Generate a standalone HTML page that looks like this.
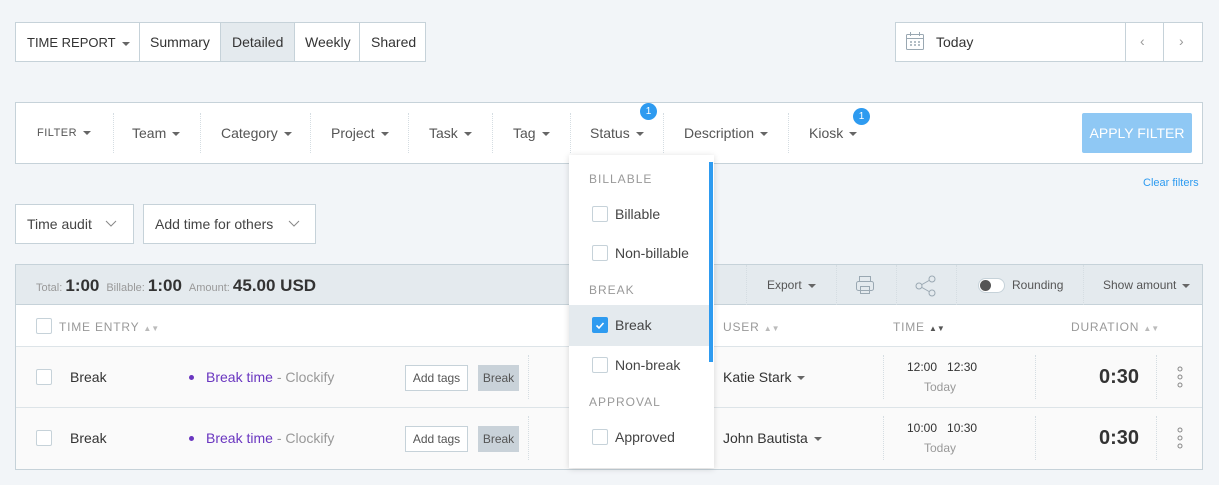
<!DOCTYPE html><html><head><meta charset="utf-8"><style>
*{box-sizing:border-box;margin:0;padding:0}
body{width:1219px;height:485px;background:#f2f5f8;font-family:"Liberation Sans",sans-serif;color:#333;position:relative;overflow:hidden;font-size:14px}
.a{position:absolute}
.box{position:absolute;background:#fff;border:1px solid #c6d2d9}
.t{position:absolute;white-space:nowrap}
.car{display:inline-block;width:0;height:0;border-left:4px solid transparent;border-right:4px solid transparent;border-top:4px solid #666;vertical-align:middle;margin-left:6px}
.sep{position:absolute;border-left:1px dotted #d5dde2}
.cb{position:absolute;width:16px;height:16px;border:1px solid #c6d2d9;background:#fff;border-radius:2px}
.g{color:#999}
.badge{position:absolute;width:17px;height:17px;border-radius:50%;background:#2e9bf0;color:#fff;font-size:10px;text-align:center;line-height:17px}
.so{color:#bbb;font-size:8px;letter-spacing:0}
</style></head><body>
<div class="box" style="left:15px;top:22px;width:411px;height:40px"></div>
<div class="a" style="left:220px;top:23px;width:74px;height:38px;background:#e4eaee"></div>
<div class="sep" style="left:139px;top:23px;height:38px;border-left:1px solid #c6d2d9"></div>
<div class="sep" style="left:220px;top:23px;height:38px;border-left:1px solid #c6d2d9"></div>
<div class="sep" style="left:294px;top:23px;height:38px;border-left:1px solid #c6d2d9"></div>
<div class="sep" style="left:359px;top:23px;height:38px;border-left:1px solid #c6d2d9"></div>
<div class="t" style="left:27px;top:35px;font-size:13px">TIME REPORT<span class="car"></span></div>
<div class="t" style="left:150px;top:34px">Summary</div>
<div class="t" style="left:232px;top:34px">Detailed</div>
<div class="t" style="left:305px;top:34px">Weekly</div>
<div class="t" style="left:371px;top:34px">Shared</div>
<div class="box" style="left:895px;top:22px;width:308px;height:40px"></div>
<div class="sep" style="left:1125px;top:23px;height:38px;border-left:1px solid #c6d2d9"></div>
<div class="sep" style="left:1163px;top:23px;height:38px;border-left:1px solid #c6d2d9"></div>
<svg class="a" style="left:905px;top:31px" width="20" height="20" viewBox="0 0 20 20" fill="none" stroke="#9aa8b2"><rect x="1.5" y="3.5" width="17" height="15" rx="1"/><path d="M1.5 7.5h17M5.5 1v4M14.5 1v4"/><path d="M5 11h2M9 11h2M13 11h2M5 14h2M9 14h2M13 14h2" stroke-width="1.5"/></svg>
<div class="t" style="left:936px;top:34px">Today</div>
<div class="t g" style="left:1140px;top:33px">‹</div>
<div class="t g" style="left:1179px;top:33px">›</div>
<div class="box" style="left:15px;top:102px;width:1188px;height:62px"></div>
<div class="t" style="left:37px;top:127px;font-size:11px;letter-spacing:.5px;color:#555">FILTER<span class="car"></span></div>
<div class="t" style="left:132px;top:125px;color:#555">Team<span class="car"></span></div>
<div class="t" style="left:221px;top:125px;color:#555">Category<span class="car"></span></div>
<div class="t" style="left:331px;top:125px;color:#555">Project<span class="car"></span></div>
<div class="t" style="left:429px;top:125px;color:#555">Task<span class="car"></span></div>
<div class="t" style="left:513px;top:125px;color:#555">Tag<span class="car"></span></div>
<div class="t" style="left:590px;top:125px;color:#555">Status<span class="car"></span></div>
<div class="t" style="left:684px;top:125px;color:#555">Description<span class="car"></span></div>
<div class="t" style="left:809px;top:125px;color:#555">Kiosk<span class="car"></span></div>
<div class="sep" style="left:113px;top:113px;height:40px"></div>
<div class="sep" style="left:200px;top:113px;height:40px"></div>
<div class="sep" style="left:310px;top:113px;height:40px"></div>
<div class="sep" style="left:408px;top:113px;height:40px"></div>
<div class="sep" style="left:492px;top:113px;height:40px"></div>
<div class="sep" style="left:570px;top:113px;height:40px"></div>
<div class="sep" style="left:663px;top:113px;height:40px"></div>
<div class="sep" style="left:788px;top:113px;height:40px"></div>
<div class="badge" style="left:640px;top:103px">1</div>
<div class="badge" style="left:853px;top:108px">1</div>
<div class="a" style="left:1082px;top:113px;width:110px;height:40px;background:#8fc8f4;border-radius:2px;color:#fff;text-align:center;line-height:40px;font-size:14px">APPLY FILTER</div>
<div class="t" style="left:1143px;top:177px;font-size:11px;color:#2e9bf0">Clear filters</div>
<div class="box" style="left:15px;top:204px;width:119px;height:40px"></div>
<div class="t" style="left:27px;top:216px;color:#444">Time audit</div>
<svg class="a" style="left:105px;top:220px" width="12" height="8"><path d="M1 1l5 5 5-5" fill="none" stroke="#888"/></svg>
<div class="box" style="left:143px;top:204px;width:173px;height:40px"></div>
<div class="t" style="left:155px;top:216px;color:#444">Add time for others</div>
<svg class="a" style="left:288px;top:220px" width="12" height="8"><path d="M1 1l5 5 5-5" fill="none" stroke="#888"/></svg>
<div class="a" style="left:15px;top:264px;width:1188px;height:206px;border:1px solid #c6d2d9;background:#fff"></div>
<div class="a" style="left:16px;top:265px;width:1186px;height:40px;background:#e4eaee;border-bottom:1px solid #c6d2d9"></div>
<div class="t" style="left:36px;top:276px"><span style="font-size:11px" class="g">Total: </span><b style="font-size:17px">1:00</b> <span style="font-size:11px" class="g">&nbsp;Billable: </span><b style="font-size:17px">1:00</b> <span style="font-size:11px" class="g">&nbsp;Amount: </span><b style="font-size:17px">45.00 USD</b></div>
<div class="sep" style="left:746px;top:265px;height:40px"></div>
<div class="sep" style="left:836px;top:265px;height:40px"></div>
<div class="sep" style="left:896px;top:265px;height:40px"></div>
<div class="sep" style="left:956px;top:265px;height:40px"></div>
<div class="sep" style="left:1083px;top:265px;height:40px"></div>
<div class="t" style="left:767px;top:278px;font-size:12px;color:#555">Export<span class="car"></span></div>
<svg class="a" style="left:855px;top:275px" width="20" height="20" fill="none" stroke="#9aa8b2"><rect x="4.5" y="1.5" width="11" height="5"/><rect x="1.5" y="6.5" width="17" height="9" rx="2"/><rect x="5.5" y="11.5" width="9" height="7"/></svg>
<svg class="a" style="left:915px;top:275px" width="22" height="22" fill="none" stroke="#9aa8b2"><circle cx="17" cy="4" r="3"/><circle cx="4" cy="11" r="3"/><circle cx="17" cy="18" r="3"/><path d="M7 9.5l7-4M7 12.5l7 4"/></svg>
<div class="a" style="left:978px;top:278px;width:27px;height:15px;border-radius:8px;border:1px solid #c6d2d9;background:#fff"></div>
<div class="a" style="left:980px;top:280px;width:11px;height:11px;border-radius:50%;background:#555"></div>
<div class="t" style="left:1012px;top:278px;font-size:12px;color:#555">Rounding</div>
<div class="t" style="left:1103px;top:278px;font-size:12px;color:#555">Show amount<span class="car"></span></div>
<div class="a" style="left:16px;top:346px;width:1186px;height:1px;background:#dde4e8"></div>
<div class="cb" style="left:36px;top:318px"></div>
<div class="t g" style="left:59px;top:320px;font-size:12px;letter-spacing:.8px">TIME ENTRY <span class="so">▲▼</span></div>
<div class="t g" style="left:723px;top:320px;font-size:12px;letter-spacing:.8px">USER <span class="so">▲▼</span></div>
<div class="t g" style="left:893px;top:320px;font-size:12px;letter-spacing:.8px">TIME <span class="so" style="color:#555">▲▼</span></div>
<div class="t g" style="left:1071px;top:320px;font-size:12px;letter-spacing:.8px">DURATION <span class="so">▲▼</span></div>
<div class="a" style="left:16px;top:347px;width:1186px;height:61px;background:#fafafa;border-bottom:1px solid #dde4e8"></div>
<div class="a" style="left:16px;top:408px;width:1186px;height:61px;background:#fafafa"></div>
<div class="cb" style="left:36px;top:369px"></div>
<div class="cb" style="left:36px;top:430px"></div>
<div class="t" style="left:70px;top:369px">Break</div>
<div class="t" style="left:70px;top:430px">Break</div>
<div class="a" style="left:189px;top:375px;width:5px;height:5px;border-radius:50%;background:#6a36c0"></div>
<div class="a" style="left:189px;top:436px;width:5px;height:5px;border-radius:50%;background:#6a36c0"></div>
<div class="t" style="left:206px;top:369px"><span style="color:#6a36c0">Break time</span> <span class="g">- Clockify</span></div>
<div class="t" style="left:206px;top:430px"><span style="color:#6a36c0">Break time</span> <span class="g">- Clockify</span></div>
<div class="a" style="left:405px;top:365px;width:63px;height:26px;border:1px solid #c6d2d9;background:#fff;font-size:12px;text-align:center;line-height:24px;color:#555">Add tags</div>
<div class="a" style="left:405px;top:426px;width:63px;height:26px;border:1px solid #c6d2d9;background:#fff;font-size:12px;text-align:center;line-height:24px;color:#555">Add tags</div>
<div class="a" style="left:478px;top:365px;width:41px;height:26px;background:#c9d2d9;font-size:12px;text-align:center;line-height:26px;color:#555">Break</div>
<div class="a" style="left:478px;top:426px;width:41px;height:26px;background:#c9d2d9;font-size:12px;text-align:center;line-height:26px;color:#555">Break</div>
<div class="sep" style="left:528px;top:355px;height:44px"></div>
<div class="sep" style="left:528px;top:416px;height:44px"></div>
<div class="t" style="left:723px;top:369px">Katie Stark<span class="car"></span></div>
<div class="t" style="left:723px;top:430px">John Bautista<span class="car"></span></div>
<div class="sep" style="left:883px;top:355px;height:44px"></div>
<div class="sep" style="left:883px;top:416px;height:44px"></div>
<div class="sep" style="left:1035px;top:355px;height:44px"></div>
<div class="sep" style="left:1035px;top:416px;height:44px"></div>
<div class="sep" style="left:1156px;top:355px;height:44px"></div>
<div class="sep" style="left:1156px;top:416px;height:44px"></div>
<div class="t" style="left:907px;top:360px;font-size:12px">12:00&nbsp;&nbsp; 12:30</div>
<div class="t g" style="left:924px;top:380px;font-size:12px">Today</div>
<div class="t" style="left:907px;top:421px;font-size:12px">10:00&nbsp;&nbsp; 10:30</div>
<div class="t g" style="left:924px;top:441px;font-size:12px">Today</div>
<div class="t" style="left:1099px;top:366px;font-size:20px;font-weight:bold">0:30</div>
<div class="t" style="left:1099px;top:427px;font-size:20px;font-weight:bold">0:30</div>
<svg class="a" style="left:1175px;top:366px" width="10" height="24" fill="none" stroke="#888"><circle cx="5" cy="3" r="2"/><circle cx="5" cy="11" r="2"/><circle cx="5" cy="19" r="2"/></svg>
<svg class="a" style="left:1175px;top:427px" width="10" height="24" fill="none" stroke="#888"><circle cx="5" cy="3" r="2"/><circle cx="5" cy="11" r="2"/><circle cx="5" cy="19" r="2"/></svg>
<div class="a" style="left:569px;top:155px;width:145px;height:313px;background:#fff;box-shadow:0 1px 6px rgba(0,0,0,.15)"></div>
<div class="a" style="left:569px;top:305px;width:141px;height:41px;background:#e4eaee"></div>
<div class="a" style="left:709px;top:162px;width:4px;height:200px;background:#2e9bf0"></div>
<div class="t g" style="left:589px;top:172px;font-size:12px;letter-spacing:1px">BILLABLE</div>
<div class="cb" style="left:592px;top:206px"></div><div class="t" style="left:615px;top:206px;color:#444">Billable</div>
<div class="cb" style="left:592px;top:245px"></div><div class="t" style="left:615px;top:245px;color:#444">Non-billable</div>
<div class="t g" style="left:589px;top:283px;font-size:12px;letter-spacing:1px">BREAK</div>
<div class="a" style="left:592px;top:317px;width:16px;height:16px;background:#2e9bf0;border-radius:2px"></div>
<svg class="a" style="left:592px;top:317px" width="16" height="16"><path d="M4.5 8.5l2.5 2.5 4.5-5" fill="none" stroke="#fff" stroke-width="1.6"/></svg>
<div class="t" style="left:615px;top:317px;color:#444">Break</div>
<div class="cb" style="left:592px;top:357px"></div><div class="t" style="left:615px;top:357px;color:#444">Non-break</div>
<div class="t g" style="left:589px;top:395px;font-size:12px;letter-spacing:1px">APPROVAL</div>
<div class="cb" style="left:592px;top:429px"></div><div class="t" style="left:615px;top:429px;color:#444">Approved</div>
</body></html>
